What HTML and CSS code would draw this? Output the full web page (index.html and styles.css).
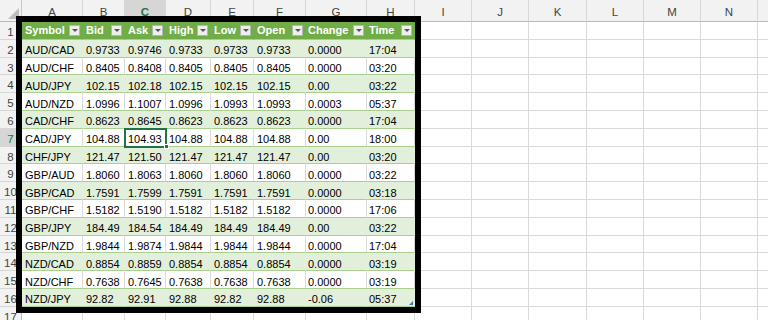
FILE: index.html
```html
<!DOCTYPE html>
<html>
<head>
<meta charset="utf-8">
<link rel="stylesheet" href="styles.css">
</head>
<body>
<div class="sheet">
  <div class="row">
    <div class="corner"><span class="tri"></span></div>
    <div class="ch">A</div><div class="ch">B</div><div class="ch sel">C</div><div class="ch">D</div><div class="ch">E</div><div class="ch">F</div><div class="ch">G</div><div class="ch">H</div><div class="ch">I</div><div class="ch">J</div><div class="ch">K</div><div class="ch">L</div><div class="ch">M</div><div class="ch">N</div><div class="ch">O</div>
  </div>
  <div class="row">
    <div class="rh">1</div>
    <div class="c th">Symbol<span class="fb"></span></div>
    <div class="c th">Bid<span class="fb"></span></div>
    <div class="c th">Ask<span class="fb"></span></div>
    <div class="c th">High<span class="fb"></span></div>
    <div class="c th">Low<span class="fb"></span></div>
    <div class="c th">Open<span class="fb"></span></div>
    <div class="c th pl2">Change<span class="fb"></span></div>
    <div class="c th pl2">Time<span class="fb"></span></div>
    <div class="c"></div><div class="c"></div><div class="c"></div><div class="c"></div><div class="c"></div><div class="c"></div><div class="c"></div>
  </div>
  <div class="row band">
    <div class="rh">2</div>
    <div class="c t">AUD/CAD</div><div class="c t">0.9733</div><div class="c t">0.9746</div><div class="c t">0.9733</div><div class="c t">0.9733</div><div class="c t">0.9733</div><div class="c t pl2">0.0000</div><div class="c t pl2">17:04</div>
    <div class="c"></div><div class="c"></div><div class="c"></div><div class="c"></div><div class="c"></div><div class="c"></div><div class="c"></div>
  </div>
  <div class="row">
    <div class="rh">3</div>
    <div class="c t">AUD/CHF</div><div class="c t">0.8405</div><div class="c t">0.8408</div><div class="c t">0.8405</div><div class="c t">0.8405</div><div class="c t">0.8405</div><div class="c t pl2">0.0000</div><div class="c t pl2">03:20</div>
    <div class="c"></div><div class="c"></div><div class="c"></div><div class="c"></div><div class="c"></div><div class="c"></div><div class="c"></div>
  </div>
  <div class="row band">
    <div class="rh">4</div>
    <div class="c t">AUD/JPY</div><div class="c t">102.15</div><div class="c t">102.18</div><div class="c t">102.15</div><div class="c t">102.15</div><div class="c t">102.15</div><div class="c t pl2">0.00</div><div class="c t pl2">03:22</div>
    <div class="c"></div><div class="c"></div><div class="c"></div><div class="c"></div><div class="c"></div><div class="c"></div><div class="c"></div>
  </div>
  <div class="row">
    <div class="rh">5</div>
    <div class="c t">AUD/NZD</div><div class="c t">1.0996</div><div class="c t">1.1007</div><div class="c t">1.0996</div><div class="c t">1.0993</div><div class="c t">1.0993</div><div class="c t pl2">0.0003</div><div class="c t pl2">05:37</div>
    <div class="c"></div><div class="c"></div><div class="c"></div><div class="c"></div><div class="c"></div><div class="c"></div><div class="c"></div>
  </div>
  <div class="row band">
    <div class="rh">6</div>
    <div class="c t">CAD/CHF</div><div class="c t">0.8623</div><div class="c t">0.8645</div><div class="c t">0.8623</div><div class="c t">0.8623</div><div class="c t">0.8623</div><div class="c t pl2">0.0000</div><div class="c t pl2">17:04</div>
    <div class="c"></div><div class="c"></div><div class="c"></div><div class="c"></div><div class="c"></div><div class="c"></div><div class="c"></div>
  </div>
  <div class="row">
    <div class="rh sel">7</div>
    <div class="c t">CAD/JPY</div><div class="c t">104.88</div><div class="c t active">104.93</div><div class="c t">104.88</div><div class="c t">104.88</div><div class="c t">104.88</div><div class="c t pl2">0.00</div><div class="c t pl2">18:00</div>
    <div class="c"></div><div class="c"></div><div class="c"></div><div class="c"></div><div class="c"></div><div class="c"></div><div class="c"></div>
  </div>
  <div class="row band">
    <div class="rh">8</div>
    <div class="c t">CHF/JPY</div><div class="c t">121.47</div><div class="c t">121.50</div><div class="c t">121.47</div><div class="c t">121.47</div><div class="c t">121.47</div><div class="c t pl2">0.00</div><div class="c t pl2">03:20</div>
    <div class="c"></div><div class="c"></div><div class="c"></div><div class="c"></div><div class="c"></div><div class="c"></div><div class="c"></div>
  </div>
  <div class="row">
    <div class="rh">9</div>
    <div class="c t">GBP/AUD</div><div class="c t">1.8060</div><div class="c t">1.8063</div><div class="c t">1.8060</div><div class="c t">1.8060</div><div class="c t">1.8060</div><div class="c t pl2">0.0000</div><div class="c t pl2">03:22</div>
    <div class="c"></div><div class="c"></div><div class="c"></div><div class="c"></div><div class="c"></div><div class="c"></div><div class="c"></div>
  </div>
  <div class="row band">
    <div class="rh">10</div>
    <div class="c t">GBP/CAD</div><div class="c t">1.7591</div><div class="c t">1.7599</div><div class="c t">1.7591</div><div class="c t">1.7591</div><div class="c t">1.7591</div><div class="c t pl2">0.0000</div><div class="c t pl2">03:18</div>
    <div class="c"></div><div class="c"></div><div class="c"></div><div class="c"></div><div class="c"></div><div class="c"></div><div class="c"></div>
  </div>
  <div class="row">
    <div class="rh">11</div>
    <div class="c t">GBP/CHF</div><div class="c t">1.5182</div><div class="c t">1.5190</div><div class="c t">1.5182</div><div class="c t">1.5182</div><div class="c t">1.5182</div><div class="c t pl2">0.0000</div><div class="c t pl2">17:06</div>
    <div class="c"></div><div class="c"></div><div class="c"></div><div class="c"></div><div class="c"></div><div class="c"></div><div class="c"></div>
  </div>
  <div class="row band">
    <div class="rh">12</div>
    <div class="c t">GBP/JPY</div><div class="c t">184.49</div><div class="c t">184.54</div><div class="c t">184.49</div><div class="c t">184.49</div><div class="c t">184.49</div><div class="c t pl2">0.00</div><div class="c t pl2">03:22</div>
    <div class="c"></div><div class="c"></div><div class="c"></div><div class="c"></div><div class="c"></div><div class="c"></div><div class="c"></div>
  </div>
  <div class="row">
    <div class="rh">13</div>
    <div class="c t">GBP/NZD</div><div class="c t">1.9844</div><div class="c t">1.9874</div><div class="c t">1.9844</div><div class="c t">1.9844</div><div class="c t">1.9844</div><div class="c t pl2">0.0000</div><div class="c t pl2">17:04</div>
    <div class="c"></div><div class="c"></div><div class="c"></div><div class="c"></div><div class="c"></div><div class="c"></div><div class="c"></div>
  </div>
  <div class="row band">
    <div class="rh">14</div>
    <div class="c t">NZD/CAD</div><div class="c t">0.8854</div><div class="c t">0.8859</div><div class="c t">0.8854</div><div class="c t">0.8854</div><div class="c t">0.8854</div><div class="c t pl2">0.0000</div><div class="c t pl2">03:19</div>
    <div class="c"></div><div class="c"></div><div class="c"></div><div class="c"></div><div class="c"></div><div class="c"></div><div class="c"></div>
  </div>
  <div class="row">
    <div class="rh">15</div>
    <div class="c t">NZD/CHF</div><div class="c t">0.7638</div><div class="c t">0.7645</div><div class="c t">0.7638</div><div class="c t">0.7638</div><div class="c t">0.7638</div><div class="c t pl2">0.0000</div><div class="c t pl2">03:19</div>
    <div class="c"></div><div class="c"></div><div class="c"></div><div class="c"></div><div class="c"></div><div class="c"></div><div class="c"></div>
  </div>
  <div class="row band">
    <div class="rh">16</div>
    <div class="c t">NZD/JPY</div><div class="c t">92.82</div><div class="c t">92.91</div><div class="c t">92.88</div><div class="c t">92.82</div><div class="c t">92.88</div><div class="c t pl2">-0.06</div><div class="c t pl2 last">05:37</div>
    <div class="c"></div><div class="c"></div><div class="c"></div><div class="c"></div><div class="c"></div><div class="c"></div><div class="c"></div>
  </div>
  <div class="row">
    <div class="rh">17</div>
    <div class="c"></div><div class="c"></div><div class="c"></div><div class="c"></div><div class="c"></div><div class="c"></div><div class="c"></div><div class="c"></div>
    <div class="c"></div><div class="c"></div><div class="c"></div><div class="c"></div><div class="c"></div><div class="c"></div><div class="c"></div>
  </div>
  <div class="frame"></div>
</div>
</body>
</html>
```

FILE: styles.css
```css
html, body {
  margin: 0;
  padding: 0;
  background: #ffffff;
  overflow: hidden;
}

body {
  font-family: "Liberation Sans", Arial, sans-serif;
  font-size: 11px;
  color: #000;
}

.sheet {
  position: relative;
  display: grid;
  grid-template-columns: 22px 61px 42px 41px 45px 43px 52px 61px 48px 57px 57px 58px 57px 57px 57px 57px;
  grid-template-rows: 22px repeat(17, 17.8px);
  width: max-content;
}

.row {
  display: contents;
}

.corner {
  position: relative;
  background: #f2f2f2;
  border-right: 1px solid #c8c8c8;
  border-bottom: 1px solid #b8b8b8;
  box-sizing: border-box;
}

.tri {
  position: absolute;
  right: 2px;
  bottom: 2px;
  width: 0;
  height: 0;
  border-left: 11px solid transparent;
  border-bottom: 11px solid #bdbdbd;
}

.ch {
  box-sizing: border-box;
  background: #f2f2f2;
  border-right: 1px solid #d6d6d6;
  border-bottom: 1px solid #b8b8b8;
  text-align: center;
  color: #444;
  font-size: 11.5px;
  line-height: 18px;
  padding-top: 3px;
}

.ch.sel {
  background: #d6d6d6;
  color: #217346;
  font-weight: bold;
  border-bottom: 2px solid #217346;
}

.rh {
  box-sizing: border-box;
  background: #f2f2f2;
  border-right: 1px solid #b8b8b8;
  border-bottom: 1px solid #d6d6d6;
  text-align: center;
  color: #444;
  font-size: 11.5px;
  line-height: 16px;
  padding-top: 2px;
}

.rh.sel {
  background: #d6d6d6;
  color: #217346;
}

.c {
  box-sizing: border-box;
  border-right: 1px solid #dadada;
  border-bottom: 1px solid #dadada;
  padding: 2.5px 0 0 3px;
  line-height: 16px;
  white-space: nowrap;
  overflow: hidden;
}

.c.pl2 {
  padding-left: 2px;
}

.t {
  border-bottom-color: #a9d08e;
}

.band .c.t {
  background: #e2efda;
  border-right-color: #e2efda;
}

.th {
  display: flex;
  align-items: center;
  justify-content: space-between;
  padding: 0 2px 0 3px;
  background: #70ad47;
  color: #ffffff;
  font-weight: bold;
  border-right-color: #70ad47;
  border-bottom-color: #a9d08e;
}

.fb {
  position: relative;
  flex: none;
  width: 11px;
  height: 11px;
  box-sizing: border-box;
  background: #eeeeee;
  border: 1px solid #b4b4b4;
}

.fb::before {
  content: "";
  position: absolute;
  left: 2px;
  top: 3px;
  border-left: 3px solid transparent;
  border-right: 3px solid transparent;
  border-top: 3px solid #555555;
}

.active {
  position: relative;
  overflow: visible;
  outline: 2px solid #217346;
  outline-offset: -1px;
}

.active::after {
  content: "";
  position: absolute;
  right: -4px;
  bottom: -3px;
  width: 5px;
  height: 5px;
  background: #217346;
  border: 1px solid #ffffff;
  box-sizing: border-box;
}

.last {
  position: relative;
}

.last::after {
  content: "";
  position: absolute;
  right: 1px;
  bottom: 1px;
  border-left: 4px solid transparent;
  border-bottom: 4px solid #4472c4;
}

.frame {
  position: absolute;
  grid-column: 2 / 10;
  grid-row: 2 / 18;
  top: 0;
  left: 0;
  right: 0;
  bottom: 0;
  z-index: 2;
  outline: 6px solid #000000;
  pointer-events: none;
}
```
